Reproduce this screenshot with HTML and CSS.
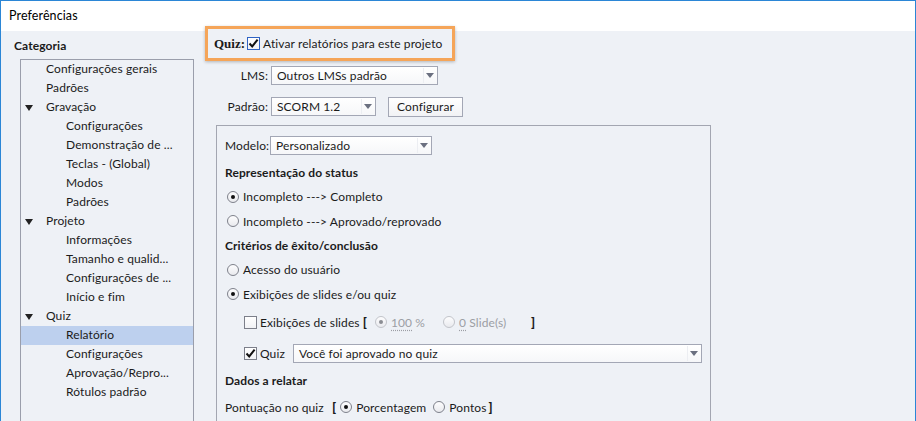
FILE: index.html
```html
<!DOCTYPE html>
<html lang="pt">
<head>
    <meta charset="UTF-8">
    <meta name="viewport" content="width=device-width, initial-scale=1.0">
    <title>Preferências</title>
    <link rel="stylesheet" href="styles.css">
</head>
<body>

    <div class="window">
        <div class="titlebar">Preferências</div>

        <div class="window-body">
            <aside class="sidebar">
                <div class="side-title">Categoria</div>
                <ul class="tree">
                    <li class="lvl1">Configurações gerais</li>
                    <li class="lvl1">Padrões</li>
                    <li class="group"><span class="caret"></span>Gravação</li>
                    <li class="lvl2">Configurações</li>
                    <li class="lvl2">Demonstração de ...</li>
                    <li class="lvl2">Teclas - (Global)</li>
                    <li class="lvl2">Modos</li>
                    <li class="lvl2">Padrões</li>
                    <li class="group"><span class="caret"></span>Projeto</li>
                    <li class="lvl2">Informações</li>
                    <li class="lvl2">Tamanho e qualid...</li>
                    <li class="lvl2">Configurações de ...</li>
                    <li class="lvl2">Início e fim</li>
                    <li class="group"><span class="caret"></span>Quiz</li>
                    <li class="lvl2 selected">Relatório</li>
                    <li class="lvl2">Configurações</li>
                    <li class="lvl2">Aprovação/Repro...</li>
                    <li class="lvl2">Rótulos padrão</li>
                </ul>
            </aside>

            <section class="content">
                <div class="quiz-toggle">
                    <span class="quiz-label">Quiz:</span>
                    <span class="checkbox checked focused">
                        <svg viewBox="0 0 11 11"><path d="M1.5 5.5 L4.2 8.4 L9.6 1.6"/></svg>
                    </span>
                    <span class="text">Ativar relatórios para este projeto</span>
                </div>

                <div class="field field-lms">
                    <span class="field-label">LMS:</span>
                    <div class="select select-lms">
                        <span class="select-text">Outros LMSs padrão</span>
                        <span class="arrow"></span>
                    </div>
                </div>

                <div class="field field-std">
                    <span class="field-label">Padrão:</span>
                    <div class="select select-std">
                        <span class="select-text">SCORM 1.2</span>
                        <span class="arrow"></span>
                    </div>
                    <button class="btn">Configurar</button>
                </div>

                <div class="panel">
                    <div class="row row-model">
                        <span class="model-label">Modelo:</span>
                        <div class="select select-model">
                            <span class="select-text">Personalizado</span>
                            <span class="arrow"></span>
                        </div>
                    </div>

                    <div class="row heading">Representação do status</div>
                    <div class="row r25"><span class="radio checked"></span>Incompleto ---&gt; Completo</div>
                    <div class="row"><span class="radio"></span>Incompleto ---&gt; Aprovado/reprovado</div>

                    <div class="row heading">Critérios de êxito/conclusão</div>
                    <div class="row r25"><span class="radio"></span>Acesso do usuário</div>
                    <div class="row"><span class="radio checked"></span>Exibições de slides e/ou quiz</div>

                    <div class="row indent r32">
                        <span class="checkbox"></span>
                        <span class="slides-label">Exibições de slides <b class="bracket">[</b></span>
                        <span class="radio checked disabled"></span>
                        <span class="muted pct"><u>100</u> %</span>
                        <span class="radio disabled"></span>
                        <span class="muted cnt"><u>0</u> Slide(s)</span>
                        <b class="bracket">]</b>
                    </div>

                    <div class="row indent r30">
                        <span class="checkbox checked">
                            <svg viewBox="0 0 11 11"><path d="M1.5 5.5 L4.2 8.4 L9.6 1.6"/></svg>
                        </span>
                        <span class="quiz-check-label">Quiz</span>
                        <div class="select select-msg">
                            <span class="select-text">Você foi aprovado no quiz</span>
                            <span class="arrow"></span>
                        </div>
                    </div>

                    <div class="row heading">Dados a relatar</div>
                    <div class="row r30">
                        <span class="score-label">Pontuação no quiz</span>
                        <b class="bracket open-br">[</b>
                        <span class="radio checked"></span>
                        <span class="pct-opt">Porcentagem</span>
                        <span class="radio"></span>
                        <span>Pontos</span>
                        <b class="bracket close-br">]</b>
                    </div>
                </div>
            </section>
        </div>
    </div>

</body>
</html>
```

FILE: styles.css
```css
body {
    margin: 0;
    padding: 0;
    font-family: 'Lato', 'Liberation Sans', sans-serif;
    font-size: 12px;
    letter-spacing: 0.1px;
    color: #1b1b1b;
    background-color: #eef1f6;
}

.window {
    width: 916px;
    height: 421px;
    box-sizing: border-box;
    border: 1px solid #2b86d6;
    border-bottom: none;
    overflow: hidden;
    background-color: #eef1f6;
}

.titlebar {
    height: 30px;
    background-color: #fff;
    padding-left: 8px;
    line-height: 30px;
    font-size: 12.5px;
    color: #000;
}

.window-body {
    display: flex;
}

/* left column with the category tree */
.sidebar {
    width: 195px;
    flex-shrink: 0;
}

.side-title {
    font-weight: bold;
    margin: 7px 0 0 13px;
    line-height: 16px;
    height: 16px;
}

.tree {
    list-style: none;
    margin: 5px 0 0 19px;
    padding: 0;
    width: 172px;
    height: 400px;
    border: 1px solid #9a9eab;
}

.tree li {
    height: 19px;
    box-sizing: border-box;
    padding-bottom: 2px;
    display: flex;
    align-items: center;
    white-space: nowrap;
}

.tree .lvl1 {
    padding-left: 25px;
}

.tree .lvl2 {
    padding-left: 45px;
}

.tree .group {
    padding-left: 4px;
}

.tree .selected {
    background-color: #bdd0ee;
}

.caret {
    width: 0;
    height: 0;
    border-left: 4px solid transparent;
    border-right: 4px solid transparent;
    border-top: 6px solid #222;
    margin: 2px 13px 0 0;
}

/* right column */
.content {
    flex: 1;
    padding-left: 9px;
}

.quiz-toggle {
    display: inline-flex;
    align-items: center;
    box-sizing: border-box;
    width: 250px;
    height: 35px;
    margin-top: -5px;
    padding-left: 6px;
    border: 3px solid #f5a559;
    box-shadow: 0 1px 3px rgba(0, 0, 0, 0.25);
    background-color: #eef1f6;
    position: relative;
}

.quiz-label {
    font-family: 'Liberation Serif', serif;
    font-weight: bold;
    font-size: 13px;
    letter-spacing: 0;
    margin-right: 2px;
}

.quiz-toggle .text {
    margin-left: 3px;
}

.checkbox {
    width: 13px;
    height: 13px;
    box-sizing: border-box;
    border: 1px solid #7c7f8a;
    background: linear-gradient(#ffffff, #f1f2f5);
    display: inline-flex;
    align-items: center;
    justify-content: center;
    flex-shrink: 0;
}

.checkbox.focused {
    border-color: #2f63c4;
}

.checkbox svg {
    width: 11px;
    height: 11px;
}

.checkbox path {
    fill: none;
    stroke: #111;
    stroke-width: 2;
}

.field {
    display: flex;
    align-items: center;
    height: 19px;
}

.field-lms {
    margin-top: 5px;
}

.field-std {
    margin-top: 12px;
}

.field-label {
    width: 63px;
    text-align: right;
    margin-right: 3px;
}

.select {
    display: flex;
    align-items: center;
    box-sizing: border-box;
    height: 19px;
    border: 1px solid #a3a7b5;
    background: linear-gradient(#ffffff, #f6f7f9);
    padding-left: 5px;
}

.select-text {
    flex: 1;
    white-space: nowrap;
}

.arrow {
    width: 12px;
    height: 15px;
    border-left: 1px solid #eceef2;
    display: flex;
    align-items: center;
    justify-content: center;
    margin-right: 1px;
}

.arrow::before {
    content: "";
    border-left: 4px solid transparent;
    border-right: 4px solid transparent;
    border-top: 5px solid #6b7080;
}

.select-lms {
    width: 167px;
}

.select-std {
    width: 105px;
}

.select-model {
    width: 162px;
}

.select-msg {
    width: 409px;
}

.btn {
    margin-left: 12px;
    width: 75px;
    height: 20px;
    padding: 0;
    border: 1px solid #a3a7b5;
    background: linear-gradient(#ffffff, #f1f2f5);
    font-family: inherit;
    font-size: 12px;
    letter-spacing: 0.1px;
    color: #1b1b1b;
}

/* reporting options box */
.panel {
    margin: 9px 0 0 11px;
    width: 495px;
    height: 400px;
    box-sizing: border-box;
    border: 1px solid #a3a6b1;
    padding: 10px 0 0 8px;
}

.row {
    display: flex;
    align-items: center;
    height: 24px;
    white-space: nowrap;
}

.row-model {
    height: 19px;
    margin-bottom: 5px;
}

.model-label {
    width: 45px;
}

.heading {
    font-weight: bold;
}

.r25 {
    height: 25px;
}

.r30 {
    height: 30px;
}

.r32 {
    height: 32px;
}

.indent {
    padding-left: 19px;
}

.radio {
    width: 12px;
    height: 12px;
    box-sizing: border-box;
    border: 1px solid #7e818b;
    border-radius: 50%;
    background: linear-gradient(#fdfdfe, #e9eaee);
    margin: 0 4px 0 2px;
    display: inline-flex;
    align-items: center;
    justify-content: center;
    flex-shrink: 0;
}

.radio.checked::before {
    content: "";
    width: 4px;
    height: 4px;
    border-radius: 50%;
    background-color: #111;
}

.radio.disabled {
    border-color: #c2c4ca;
}

.radio.disabled.checked::before {
    background-color: #8b8d93;
}

.checkbox + .slides-label,
.checkbox + .quiz-check-label {
    margin-left: 3px;
}

.slides-label {
    width: 113px;
    flex-shrink: 0;
}

.bracket {
    font-size: 13px;
    font-weight: 900;
}

.muted {
    color: #9c9ea4;
}

.muted u {
    text-decoration: underline dotted;
    text-underline-offset: 3px;
}

.pct {
    width: 50px;
    flex-shrink: 0;
}

.cnt {
    width: 72px;
    flex-shrink: 0;
}

.quiz-check-label {
    width: 33px;
}

.score-label {
    width: 107px;
    flex-shrink: 0;
}

.open-br {
    margin-right: 2px;
}

.pct-opt {
    margin-right: 5px;
}

.close-br {
    margin-left: 2px;
}
```
